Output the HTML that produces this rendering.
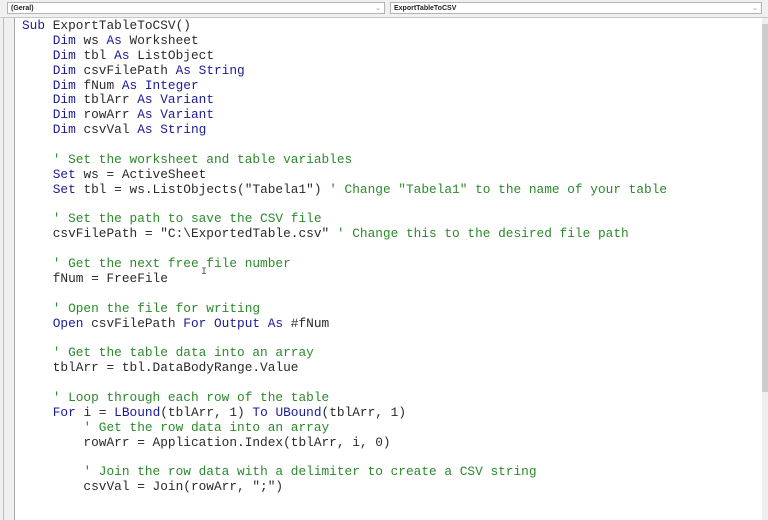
<!DOCTYPE html>
<html><head><meta charset="utf-8"><style>
html,body{margin:0;padding:0;width:768px;height:520px;overflow:hidden;background:#fff;font-family:"Liberation Sans",sans-serif}
.top{position:absolute;left:0;top:0;width:768px;height:17px;background:#f0f0f0;border-bottom:1px solid #c8c8c8}
.cb{position:absolute;top:2px;height:12px;background:#fff;border:1px solid #b4b4b4;font-size:7px;font-weight:bold;line-height:12px;padding-left:3px;box-sizing:border-box;color:#222}
.cb span{position:absolute;right:3px;top:0;color:#999;font-weight:normal}
.gut{position:absolute;left:0;top:18px;width:14px;height:502px;background:#f0f0f0;border-right:1px solid #a8a8a8}
.gut:before{content:"";position:absolute;left:3px;top:0;width:1px;height:100%;background:#bbb}
.sb{position:absolute;left:762px;top:18px;width:6px;height:502px;background:#efefef}
.th{position:absolute;left:762px;top:24px;width:6px;height:368px;background:#cdcdcd}
pre{position:absolute;left:22px;top:19px;margin:0;font-family:"Liberation Mono",monospace;font-size:12.8px;line-height:14.87px;color:#2a2a2a}
.k{color:#1a1a9a}.c{color:#2a8a2a}
</style></head><body>
<div class="top">
<div class="cb" style="left:7px;width:378px">(Geral)<span>⌄</span></div>
<div class="cb" style="left:390px;width:372px">ExportTableToCSV<span>⌄</span></div>
</div>
<div class="gut"></div>
<div class="sb"></div><div class="th"></div>
<pre><span class="k">Sub</span> ExportTableToCSV()
    <span class="k">Dim</span> ws <span class="k">As</span> Worksheet
    <span class="k">Dim</span> tbl <span class="k">As</span> ListObject
    <span class="k">Dim</span> csvFilePath <span class="k">As String</span>
    <span class="k">Dim</span> fNum <span class="k">As Integer</span>
    <span class="k">Dim</span> tblArr <span class="k">As Variant</span>
    <span class="k">Dim</span> rowArr <span class="k">As Variant</span>
    <span class="k">Dim</span> csvVal <span class="k">As String</span>

    <span class="c">' Set the worksheet and table variables</span>
    <span class="k">Set</span> ws = ActiveSheet
    <span class="k">Set</span> tbl = ws.ListObjects("Tabela1") <span class="c">' Change "Tabela1" to the name of your table</span>

    <span class="c">' Set the path to save the CSV file</span>
    csvFilePath = "C:\ExportedTable.csv" <span class="c">' Change this to the desired file path</span>

    <span class="c">' Get the next free file number</span>
    fNum = FreeFile

    <span class="c">' Open the file for writing</span>
    <span class="k">Open</span> csvFilePath <span class="k">For Output As</span> #fNum

    <span class="c">' Get the table data into an array</span>
    tblArr = tbl.DataBodyRange.Value

    <span class="c">' Loop through each row of the table</span>
    <span class="k">For</span> i = <span class="k">LBound</span>(tblArr, 1) <span class="k">To</span> <span class="k">UBound</span>(tblArr, 1)
        <span class="c">' Get the row data into an array</span>
        rowArr = Application.Index(tblArr, i, 0)

        <span class="c">' Join the row data with a delimiter to create a CSV string</span>
        csvVal = Join(rowArr, ";")</pre>
<div style="position:absolute;left:201px;top:267px;font-family:'Liberation Mono',monospace;font-size:10px;color:#555">I</div>
</body></html>
